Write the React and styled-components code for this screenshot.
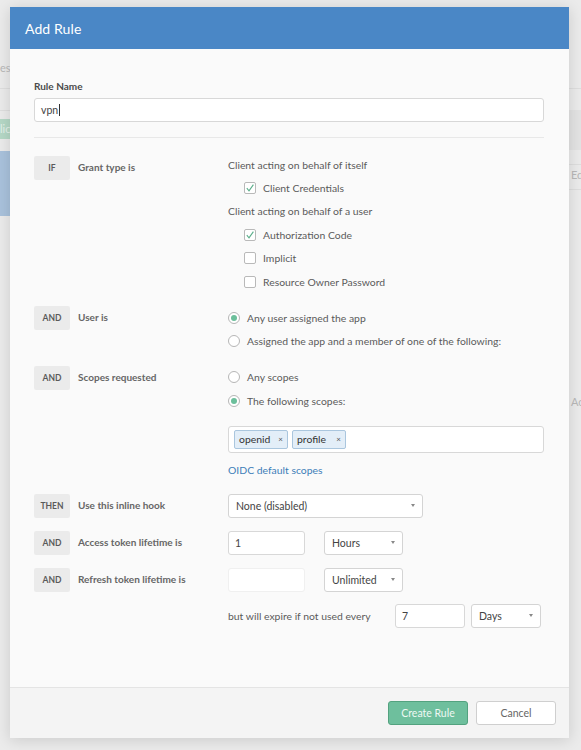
import React from 'react'
import styled, { createGlobalStyle } from 'styled-components'

const GlobalStyle = createGlobalStyle`
  html, body {
    margin: 0;
    padding: 0;
    background: #ebebeb;
    font-family: Lato, 'Open Sans', sans-serif;
    color: #555;
  }
  * { box-sizing: border-box; }
`

const Page = styled.div`
  position: relative;
  width: 581px;
  height: 750px;
  overflow: hidden;
  display: flex;
  justify-content: space-between;
`

const Strip = styled.div`
  width: ${p => p.$w}px;
  overflow: hidden;
  display: flex;
  flex-direction: column;
  padding-top: 58px;
`

const GhostText = styled.div`
  font-size: 11px;
  color: #b8b8b8;
  height: ${p => p.$h || 20}px;
  line-height: ${p => p.$h || 20}px;
  white-space: nowrap;
  margin-left: ${p => p.$ml || 0}px;
  margin-top: ${p => p.$mt || 0}px;
`

const GhostLine = styled.div`
  height: 1px;
  background: #dedede;
  margin-top: ${p => p.$mt || 0}px;
`

const GhostBlock = styled.div`
  height: ${p => p.$h}px;
  margin-top: ${p => p.$mt || 0}px;
  background: ${p => p.$bg};
  color: #e4f1ea;
  font-size: 11px;
  line-height: ${p => p.$h}px;
  white-space: nowrap;
`

const Modal = styled.div`
  position: absolute;
  top: 7px;
  left: 10px;
  width: 559px;
  height: 731px;
  display: flex;
  flex-direction: column;
  background: #fafafa;
  box-shadow: 0 2px 14px rgba(0, 0, 0, 0.14);
`

const Header = styled.div`
  height: 42px;
  background: #4a87c6;
  color: #fff;
  font-size: 14px;
  padding-left: 15px;
  display: flex;
  align-items: center;
  letter-spacing: 0.1px;
`

const Body = styled.div`
  flex: 1;
  padding: 31px 25px 0 24px;
`

const FieldLabel = styled.div`
  font-size: 10px;
  font-weight: 700;
  color: #4a4a4a;
  line-height: 12px;
  margin-bottom: 6px;
`

const TextInput = styled.div`
  height: ${p => p.$h || 24}px;
  width: ${p => (p.$w ? `${p.$w}px` : '100%')};
  background: #fff;
  border: 1px solid ${p => (p.$faint ? '#f0f0f0' : '#d8d8d8')};
  border-radius: 3px;
  font-size: 10.5px;
  color: #444;
  padding-left: 6px;
  display: flex;
  align-items: center;
  flex-shrink: 0;
`

const Caret = styled.span`
  display: inline-block;
  width: 1px;
  height: 12px;
  background: #333;
  margin-left: 1px;
`

const Divider = styled.div`
  height: 1px;
  background: #e8e8e8;
  margin: 15px 0 18px;
`

const Rule = styled.div`
  display: flex;
  align-items: flex-start;
  margin-bottom: ${p => p.$mb ?? 13}px;
`

const Badge = styled.div`
  width: 36px;
  height: 24px;
  flex-shrink: 0;
  background: #ebebeb;
  border-radius: 2px;
  font-size: 8.5px;
  font-weight: 700;
  color: #5a5a5a;
  display: flex;
  align-items: center;
  justify-content: center;
  margin-right: 8px;
`

const BadgeSpacer = styled.div`
  width: 194px;
  flex-shrink: 0;
`

const RuleLabel = styled.div`
  width: 150px;
  flex-shrink: 0;
  font-size: 10px;
  font-weight: 700;
  color: #666;
  line-height: 22px;
`

const Options = styled.div`
  flex: 1;
  display: flex;
  flex-direction: column;
`

const OptionTitle = styled.div`
  height: 23.4px;
  margin-top: ${p => (p.$first ? -3 : 0)}px;
  font-size: 10.4px;
  color: #5a5a5a;
  display: flex;
  align-items: center;
`

const Option = styled.label`
  height: 23.4px;
  display: flex;
  align-items: center;
  font-size: 10.4px;
  color: #5a5a5a;
  padding-left: ${p => (p.$indent ? 16 : 0)}px;
`

const Box = styled.span`
  width: 12px;
  height: 12px;
  border: 1px solid #b9b9b9;
  border-radius: 2px;
  background: #fff;
  margin-right: 7px;
  display: flex;
  align-items: center;
  justify-content: center;
`

const Radio = styled.span`
  width: 12px;
  height: 12px;
  border: 1px solid #b6b6b6;
  border-radius: 50%;
  background: #fff;
  margin-right: 7px;
  display: flex;
  align-items: center;
  justify-content: center;

  &::after {
    content: '';
    display: ${p => (p.$on ? 'block' : 'none')};
    width: 6px;
    height: 6px;
    border-radius: 50%;
    background: #6cbf9b;
  }
`

const TagInput = styled.div`
  margin-top: 13px;
  height: 27px;
  background: #fff;
  border: 1px solid #d8d8d8;
  border-radius: 3px;
  display: flex;
  align-items: center;
  gap: 4px;
  padding-left: 5px;
`

const Tag = styled.span`
  height: 19px;
  width: ${p => p.$w}px;
  background: #e3eef8;
  border: 1px solid #aac6de;
  border-radius: 2px;
  font-size: 10.4px;
  color: #333;
  display: flex;
  align-items: center;
  justify-content: space-between;
  padding: 0 4px 0 4px;

  small {
    font-size: 8px;
    color: #555;
  }
`

const Link = styled.a`
  margin-top: 11px;
  margin-bottom: 5px;
  font-size: 10.4px;
  line-height: 12px;
  color: #3c7db8;
  text-decoration: none;
`

const Controls = styled.div`
  flex: 1;
  display: flex;
  align-items: center;
  gap: ${p => p.$gap ?? 19}px;
  height: 24px;
`

const Select = styled.div`
  width: ${p => p.$w}px;
  height: 24px;
  flex-shrink: 0;
  margin-left: ${p => p.$ml || 0}px;
  background: #fff;
  border: 1px solid #d4d4d4;
  border-radius: 3px;
  font-size: 10.5px;
  color: #444;
  padding: 0 7px;
  display: flex;
  align-items: center;
  justify-content: space-between;

  &::after {
    content: '';
    border-left: 2.5px solid transparent;
    border-right: 2.5px solid transparent;
    border-top: 3.5px solid #888;
  }
`

const InlineText = styled.div`
  font-size: 10.4px;
  color: #5a5a5a;
  width: 167px;
  flex-shrink: 0;
`

const Footer = styled.div`
  height: 51px;
  border-top: 1px solid #e4e4e4;
  background: #f4f4f4;
  display: flex;
  justify-content: flex-end;
  align-items: flex-start;
  gap: 8px;
  padding: 13px 13px 0 0;
`

const Button = styled.button`
  width: 80px;
  height: 24px;
  border-radius: 3px;
  font-family: inherit;
  font-size: 10.5px;
  cursor: pointer;
  background: ${p => (p.$primary ? '#6ebf9d' : '#fff')};
  border: 1px solid ${p => (p.$primary ? '#53a27f' : '#cfcfcf')};
  color: ${p => (p.$primary ? '#eef8f3' : '#666')};
`

const Check = () => (
  <svg width="10" height="10" viewBox="0 0 10 10">
    <path d="M1.8 5.2 L4 7.8 L8.4 1.6" fill="none" stroke="#5aae8a" strokeWidth="1.1" />
  </svg>
)

const CheckOption = ({ checked, children }) => (
  <Option $indent>
    <Box>{checked && <Check />}</Box>
    {children}
  </Option>
)

const RadioOption = ({ on, children }) => (
  <Option>
    <Radio $on={on} />
    {children}
  </Option>
)

export default function App() {
  return (
    <>
      <GlobalStyle />
      <Page>
        <Strip $w={10}>
          <GhostText>es</GhostText>
          <GhostLine $mt={10} />
          <GhostLine $mt={21} />
          <GhostBlock $h={20} $mt={8} $bg="#b5d8c6">lic</GhostBlock>
          <GhostBlock $h={65} $mt={12} $bg="#a9c2dc" />
        </Strip>
        <Strip $w={12}>
          <GhostLine $mt={30} />
          <GhostBlock $h={40} $mt={21} $bg="#e3e3e3" />
          <GhostLine $mt={14} />
          <GhostText $ml={2}>Ed</GhostText>
          <GhostLine $mt={4} />
          <GhostText $ml={2} $mt={202}>Ac</GhostText>
        </Strip>

        <Modal>
          <Header>Add Rule</Header>
          <Body>
            <FieldLabel>Rule Name</FieldLabel>
            <TextInput $h={24}>
              vpn<Caret />
            </TextInput>
            <Divider />

            <Rule $mb={12.6}>
              <Badge>IF</Badge>
              <RuleLabel>Grant type is</RuleLabel>
              <Options>
                <OptionTitle $first>Client acting on behalf of itself</OptionTitle>
                <CheckOption checked>Client Credentials</CheckOption>
                <OptionTitle>Client acting on behalf of a user</OptionTitle>
                <CheckOption checked>Authorization Code</CheckOption>
                <CheckOption>Implicit</CheckOption>
                <CheckOption>Resource Owner Password</CheckOption>
              </Options>
            </Rule>

            <Rule>
              <Badge>AND</Badge>
              <RuleLabel>User is</RuleLabel>
              <Options>
                <RadioOption on>Any user assigned the app</RadioOption>
                <RadioOption>Assigned the app and a member of one of the following:</RadioOption>
              </Options>
            </Rule>

            <Rule>
              <Badge>AND</Badge>
              <RuleLabel>Scopes requested</RuleLabel>
              <Options>
                <RadioOption>Any scopes</RadioOption>
                <RadioOption on>The following scopes:</RadioOption>
                <TagInput>
                  <Tag $w={54}>
                    openid <small>×</small>
                  </Tag>
                  <Tag $w={54}>
                    profile <small>×</small>
                  </Tag>
                </TagInput>
                <Link href="#">OIDC default scopes</Link>
              </Options>
            </Rule>

            <Rule>
              <Badge>THEN</Badge>
              <RuleLabel>Use this inline hook</RuleLabel>
              <Controls>
                <Select $w={195}>None (disabled)</Select>
              </Controls>
            </Rule>

            <Rule>
              <Badge>AND</Badge>
              <RuleLabel>Access token lifetime is</RuleLabel>
              <Controls>
                <TextInput $w={77}>1</TextInput>
                <Select $w={79}>Hours</Select>
              </Controls>
            </Rule>

            <Rule $mb={12}>
              <Badge>AND</Badge>
              <RuleLabel>Refresh token lifetime is</RuleLabel>
              <Controls>
                <TextInput $w={77} $faint />
                <Select $w={79}>Unlimited</Select>
              </Controls>
            </Rule>

            <Rule>
              <BadgeSpacer />
              <Controls $gap={0}>
                <InlineText>but will expire if not used every</InlineText>
                <TextInput $w={70}>7</TextInput>
                <Select $w={70} $ml={6}>
                  Days
                </Select>
              </Controls>
            </Rule>
          </Body>
          <Footer>
            <Button $primary>Create Rule</Button>
            <Button>Cancel</Button>
          </Footer>
        </Modal>
      </Page>
    </>
  )
}
